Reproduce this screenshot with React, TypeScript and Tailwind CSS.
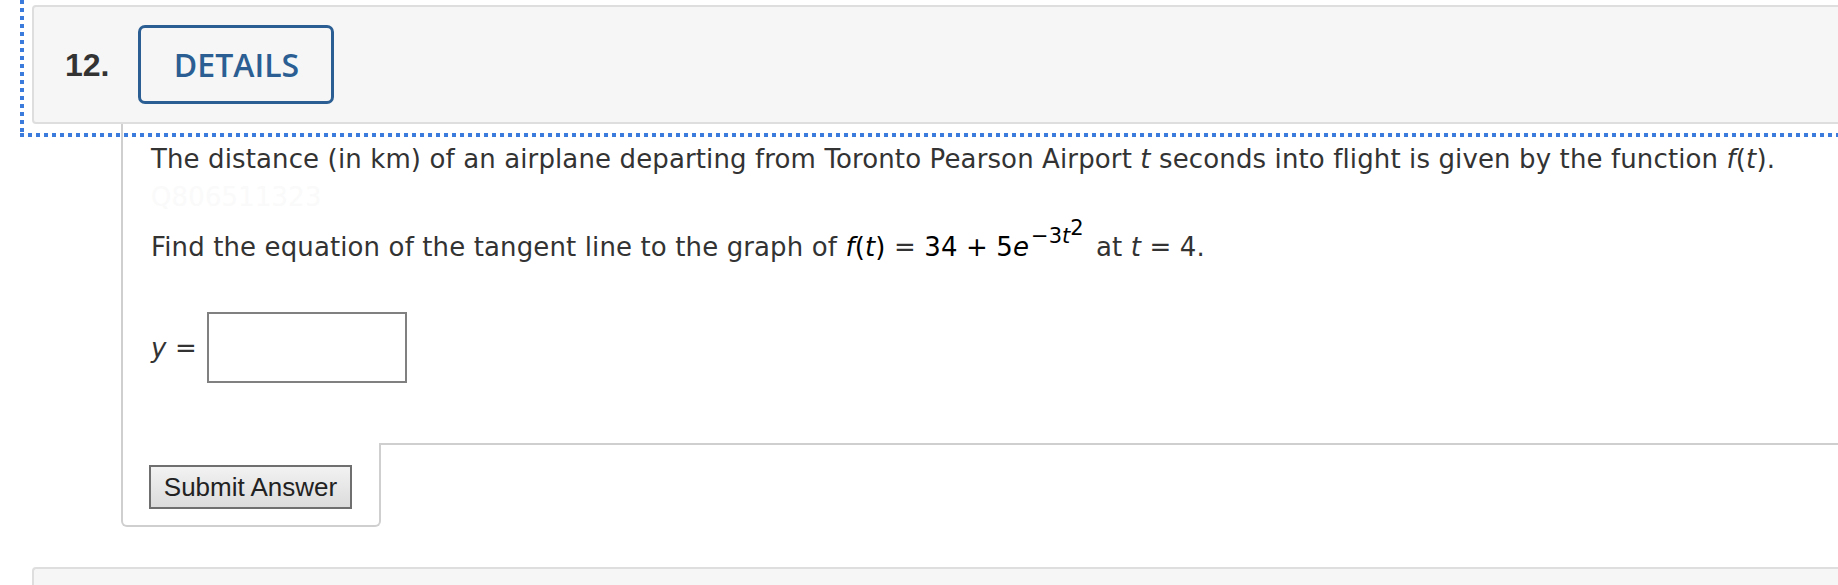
import React from 'react';

// Question 12 card: focused header, question body, submit tab
const BORDER = 'border-[#cfcfcf]';

function MathExpr() {
  return (
    <span className="text-black">
      <i>f</i>(<i>t</i>) <span className="text-[#333]">=</span> 34 + 5<i>e</i>
      <span className="relative -top-[13px] text-[21px] ml-[2px] mr-[4px] leading-none tracking-normal">
        −3<i>t</i>
        <span className="relative -top-[8px]">2</span>
      </span>
    </span>
  );
}

export default function App() {
  return (
    <div className="relative w-[1838px] h-[585px] overflow-hidden bg-white font-['DejaVu_Sans',sans-serif] text-[#333]">
      {/* question header */}
      <div className="pt-[5px] pl-[32px]">
        <div className="w-[1900px] h-[119px] bg-[#f6f6f6] border-2 border-[#dedede] rounded-[4px] flex items-center">
          <span className="ml-[31px] text-[32px] font-bold text-[#333] font-['Liberation_Sans',sans-serif]">12.</span>
          <button className="ml-[29px] w-[196px] h-[79px] border-[3px] border-[#2b5f93] rounded-[7px] text-[#2b5f93] text-[32px] font-semibold font-['Open_Sans',sans-serif]">
            DETAILS
          </button>
        </div>
      </div>

      {/* question body */}
      <div className="ml-[121px]">
        <div className={`border-l-2 ${BORDER} pl-[28px] pt-[16px] pb-[60px] text-[26px] tracking-[0.12px] leading-[38px]`}>
          <p>
            The distance (in km) of an airplane departing from Toronto Pearson Airport <i>t</i> seconds into flight is given by the function <i>f</i>(<i>t</i>).
          </p>
          <div className="text-[#fafafa]">Q806511323</div>
          <p className="mt-[12px]">
            Find the equation of the tangent line to the graph of <MathExpr /> at <i>t</i> = 4.
          </p>
          <div className="flex items-center mt-[46px]">
            <span className="w-[56px]"><i>y</i> =</span>
            <input className="w-[200px] h-[71px] border-2 border-[#808080] bg-white" />
          </div>
        </div>
        <div className="flex">
          <div className={`w-[260px] border-x-2 border-b-2 ${BORDER} rounded-b-[6px] pl-[26px] pt-[22px] pb-[16px]`}>
            <button className="w-[203px] h-[44px] border-2 border-[#6f6f6f] bg-gradient-to-b from-[#f2f2f2] to-[#dcdcdc] text-[26px] text-[#222] font-['Liberation_Sans',sans-serif] leading-none">
              Submit Answer
            </button>
          </div>
          <div className={`flex-1 border-t-2 ${BORDER}`} />
        </div>
      </div>

      {/* next question header */}
      <div className="ml-[32px] mt-[40px] h-[40px] bg-[#f6f6f6] border-l-2 border-t-2 border-[#dedede] rounded-tl-[4px]" />

      {/* keyboard focus ring over the header */}
      <div className="absolute left-[20px] top-0 w-[4px] h-[137px] bg-[image:repeating-linear-gradient(to_bottom,#3a7bdc_0_4px,transparent_4px_8px)]" />
      <div className="absolute left-[20px] right-0 top-[133px] h-[4px] bg-[image:repeating-linear-gradient(to_right,#3a7bdc_0_4px,transparent_4px_8px)]" />
    </div>
  );
}
